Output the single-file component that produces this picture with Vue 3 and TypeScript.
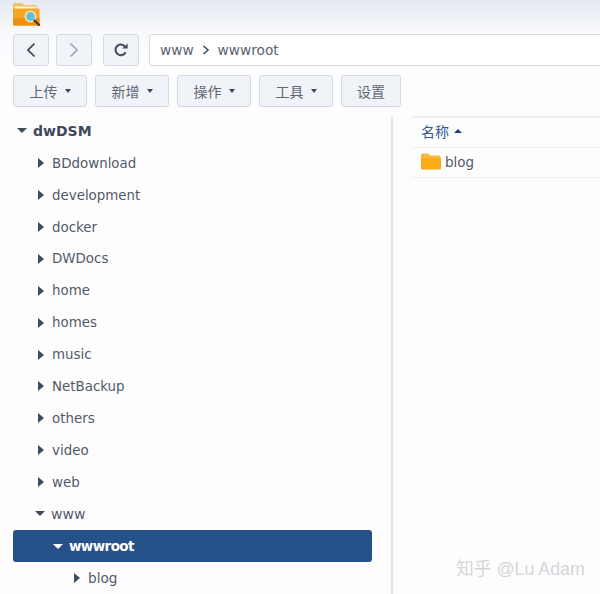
<script setup lang="ts">
const nodes: string[] = ['BDdownload','development','docker','DWDocs','home','homes','music','NetBackup','others','video','web']
const tools: { label: string; caret: boolean }[] = [
  { label: '上传', caret: true },
  { label: '新增', caret: true },
  { label: '操作', caret: true },
  { label: '工具', caret: true },
  { label: '设置', caret: false },
]
</script>

<template>
  <div class="win">
    <div class="title">
      <svg class="logo" width="30" height="26" viewBox="0 0 30 26">
        <path d="M1 4.5 Q1 3 2.5 3 H10 L12 5 H23 Q25 5 25 7 V9 H1 Z" fill="#eec26a"/>
        <path d="M3 6.5 H24 V11 H3 Z" fill="#fdf3dc"/>
        <path d="M1 8.5 H26 Q27.5 8.5 27.5 10 V24 Q27.5 25.5 26 25.5 H2.5 Q1 25.5 1 24 Z" fill="#f5a623"/>
        <path d="M1 18 H27.5 V24 Q27.5 25.5 26 25.5 H2.5 Q1 25.5 1 24 Z" fill="#ee8f12"/>
        <circle cx="18.5" cy="16.5" r="5.2" fill="#5fc1e0" stroke="#fbe3ad" stroke-width="1.6"/>
        <path d="M22.5 20.5 L27 25" stroke="#5a3a22" stroke-width="2.4" stroke-linecap="round"/>
      </svg>
    </div>

    <div class="nav">
      <button class="btn square">
        <svg width="12" height="16" viewBox="0 0 12 16"><path d="M9.5 1.5 L3 8 L9.5 14.5" fill="none" stroke="#36404f" stroke-width="1.7"/></svg>
      </button>
      <button class="btn square">
        <svg width="12" height="16" viewBox="0 0 12 16"><path d="M2.5 1.5 L9 8 L2.5 14.5" fill="none" stroke="#9aa3af" stroke-width="1.5"/></svg>
      </button>
      <button class="btn square refresh">
        <svg width="16" height="16" viewBox="0 0 16 16"><path d="M12.6 10.2 A5.3 5.3 0 1 1 12 4.6" fill="none" stroke="#3f4a5a" stroke-width="2"/><path d="M9.2 6.6 H14.6 V1.4 Z" fill="#3f4a5a"/></svg>
      </button>
      <div class="addr">
        <span>www</span>
        <svg width="8" height="10" viewBox="0 0 8 10"><path d="M1.5 1 L6 5 L1.5 9" fill="none" stroke="#444e5c" stroke-width="1.6"/></svg>
        <span>wwwroot</span>
      </div>
    </div>

    <div class="tools">
      <button v-for="t in tools" :key="t.label" class="btn tool" :class="{ plain: !t.caret }">
        {{ t.label }}<i v-if="t.caret" class="caret"></i>
      </button>
    </div>

    <div class="body">
      <div class="tree">
        <div class="row root"><i class="tri down"></i><b>dwDSM</b></div>
        <div v-for="n in nodes" :key="n" class="row l1"><i class="tri right"></i>{{ n }}</div>
        <div class="row l1 open"><i class="tri down"></i>www</div>
        <div class="row l2 sel"><i class="tri down white"></i><b>wwwroot</b></div>
        <div class="row l3"><i class="tri right"></i>blog</div>
      </div>
      <div class="list">
        <div class="head">名称<i class="tri up"></i></div>
        <div class="file">
          <svg width="20" height="17" viewBox="0 0 20 17"><path d="M0 2 Q0 .5 1.5 .5 H7 L9 2.5 H18 Q19.5 2.5 19.5 4 V6 H0 Z" fill="#f6b73c"/><path d="M0 5 H19 Q20 5 20 6 V15.5 Q20 16.5 19 16.5 H1 Q0 16.5 0 15.5 Z" fill="#fdaa17"/></svg>
          <span>blog</span>
        </div>
      </div>
    </div>

    <div class="mark">知乎 @Lu Adam</div>
  </div>
</template>

<style>
html, body { margin: 0; background: #fdfdfe; }
</style>

<style scoped>
.win {
  position: relative;
  width: 600px;
  height: 594px;
  overflow: hidden;
  display: flex;
  flex-direction: column;
  background: linear-gradient(#e5e9f2 0, #f8f9fb 32px, #fdfdfe 60px);
  font-family: "DejaVu Sans", "Noto Sans CJK SC", sans-serif;
  font-size: 14px;
  color: #525a68;
}
.title { height: 34px; padding-left: 12px; box-sizing: border-box; flex: none; }
.logo { display: block; }
.btn {
  box-sizing: border-box;
  border: 1px solid #d3d9e2;
  border-radius: 3px;
  background: #f0f3f8;
  font: inherit;
  color: #5f6775;
  padding: 0;
  display: flex;
  align-items: center;
  justify-content: center;
}
.nav { display: flex; height: 32px; padding-left: 13px; gap: 7px; flex: none; }
.square { width: 36px; height: 32px; }
.refresh { margin-left: 4px; }
.addr {
  flex: 1;
  margin-left: 3px;
  margin-right: -4px;
  box-sizing: border-box;
  display: flex;
  align-items: center;
  gap: 8px;
  padding-left: 10px;
  background: #fff;
  border: 1px solid #d6dbe3;
  border-radius: 3px;
  color: #5a6372;
  font-size: 13.7px;
}
.tools { display: flex; gap: 8px; padding: 9px 0 0 13px; height: 32px; flex: none; }
.tool { width: 74px; height: 32px; font-size: 14px; gap: 7px; }
.tool.plain { width: 60px; }
.caret {
  width: 0; height: 0;
  border-left: 3.5px solid transparent;
  border-right: 3.5px solid transparent;
  border-top: 4px solid #3d4757;
}
.body { display: flex; flex: 1; margin-top: 9px; min-height: 0; }
.tree {
  width: 378px;
  flex: none;
  padding-left: 13px;
  border-right: 2px solid #e3e6eb;
  margin-right: 19px;
}
.row {
  height: 31.88px;
  width: 359px;
  display: flex;
  align-items: center;
  box-sizing: border-box;
  padding-bottom: 1px;
  white-space: nowrap;
}
.root { padding-left: 4px; padding-bottom: 2px; color: #3f4859; }
.l1 { padding-left: 22px; font-size: 13.4px; }
.l1.open { font-size: 14px; }
.l2 { padding-left: 40px; font-size: 13.5px; letter-spacing: -0.6px; }
.l3 { padding-left: 58px; font-size: 13.6px; }
.tri { flex: none; width: 0; height: 0; display: block; }
.tri.right {
  border-top: 5px solid transparent;
  border-bottom: 5px solid transparent;
  border-left: 6px solid #3f4a5c;
  margin-left: 3px;
  margin-right: 8px;
}
.tri.down {
  border-left: 5.5px solid transparent;
  border-right: 5.5px solid transparent;
  border-top: 5.5px solid #3f4a5c;
  margin-right: 6px;
}
.tri.white { border-top-color: #fff; }
.tri.up {
  border-left: 4px solid transparent;
  border-right: 4px solid transparent;
  border-bottom: 4px solid #1f3f7a;
  margin-left: 5px;
}
.sel { background: #265289; color: #fff; border-radius: 3px; padding-bottom: 0; }
.list { flex: 1; min-width: 0; }
.head {
  box-sizing: border-box;
  height: 32px;
  border-top: 2px solid #eef0f3;
  border-bottom: 1px solid #eef0f3;
  display: flex;
  align-items: center;
  padding-left: 9px;
  padding-bottom: 3px;
  font-size: 14px;
  color: #34598d;
}
.file {
  box-sizing: border-box;
  height: 30px;
  border-bottom: 1px solid #eef0f3;
  display: flex;
  align-items: center;
  padding-left: 9px;
  padding-bottom: 2px;
  gap: 4px;
  font-size: 13.5px;
  color: #525a68;
}
.mark {
  position: absolute;
  left: 456px;
  top: 554px;
  font-family: "Liberation Sans", "Noto Sans CJK SC", sans-serif;
  font-size: 17.8px;
  color: #d5d6da;
  white-space: nowrap;
}
</style>
